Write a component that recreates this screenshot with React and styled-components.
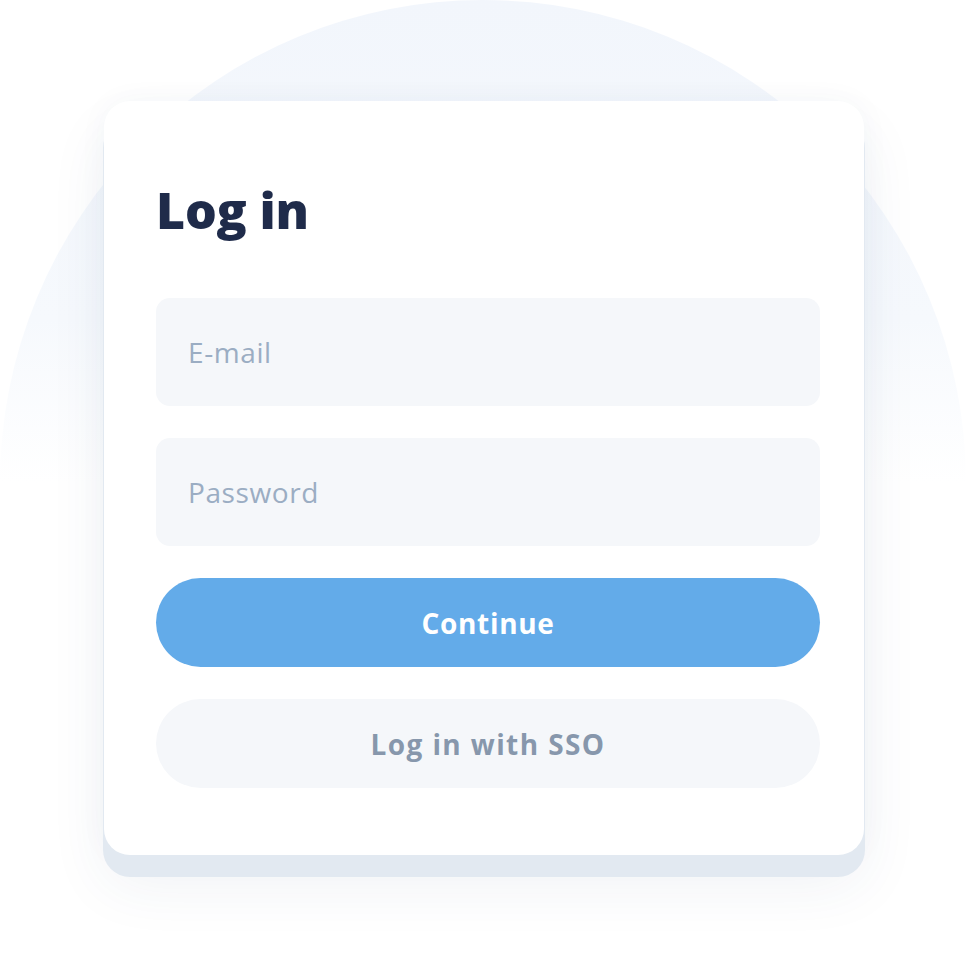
import styled, { createGlobalStyle } from "styled-components";

const GlobalStyle = createGlobalStyle`
  html, body {
    margin: 0;
    padding: 0;
    background: #ffffff;
  }
  body {
    font-family: "Open Sans", "Lato", sans-serif;
  }
`;

const Stage = styled.div`
  width: 966px;
  height: 966px;
  border-radius: 50%;
  background: linear-gradient(180deg, #f2f6fc 0%, #f6f9fd 33%, #ffffff 50%);
  display: flex;
  justify-content: center;
  padding: 101px 0 0 2px;
  box-sizing: border-box;
`;

const Card = styled.form`
  width: 760px;
  height: 754px;
  box-sizing: border-box;
  background: #ffffff;
  border-radius: 26px;
  padding: 84px 44px 0 52px;
  display: flex;
  flex-direction: column;
  box-shadow: 0 21px 0 1px #e2e9f1, 0 30px 60px rgba(40, 70, 120, 0.07),
    0 0 30px rgba(40, 70, 120, 0.04);
`;

const Title = styled.h1`
  margin: 0 0 63px;
  font-size: 50px;
  line-height: 1;
  font-weight: 800;
  color: #1f2b4a;
  letter-spacing: -0.2px;
`;

const Field = styled.input`
  height: 108px;
  width: 664px;
  box-sizing: border-box;
  border: none;
  outline: none;
  border-radius: 14px;
  background: #f5f7fa;
  padding: 0 32px;
  margin-bottom: 32px;
  font-family: "Open Sans", sans-serif;
  font-size: 28px;
  letter-spacing: 0.6px;
  color: #1f2b4a;

  &::placeholder {
    color: #9badc3;
  }
`;

const Button = styled.button`
  height: 89px;
  width: 664px;
  border: none;
  border-radius: 45px;
  margin-bottom: 32px;
  font-family: "Open Sans", sans-serif;
  font-weight: 700;
  font-size: 28px;
  letter-spacing: ${(p) => (p.$primary ? "0.7px" : "1.4px")};
  cursor: pointer;
  background: ${(p) => (p.$primary ? "#63abe9" : "#f5f7fa")};
  color: ${(p) => (p.$primary ? "#ffffff" : "#8797ac")};
`;

export default function App() {
  return (
    <>
      <GlobalStyle />
      <Stage>
        <Card onSubmit={(e) => e.preventDefault()}>
          <Title>Log in</Title>
          <Field type="email" placeholder="E-mail" />
          <Field type="password" placeholder="Password" />
          <Button $primary type="submit">Continue</Button>
          <Button type="button">Log in with SSO</Button>
        </Card>
      </Stage>
    </>
  );
}
